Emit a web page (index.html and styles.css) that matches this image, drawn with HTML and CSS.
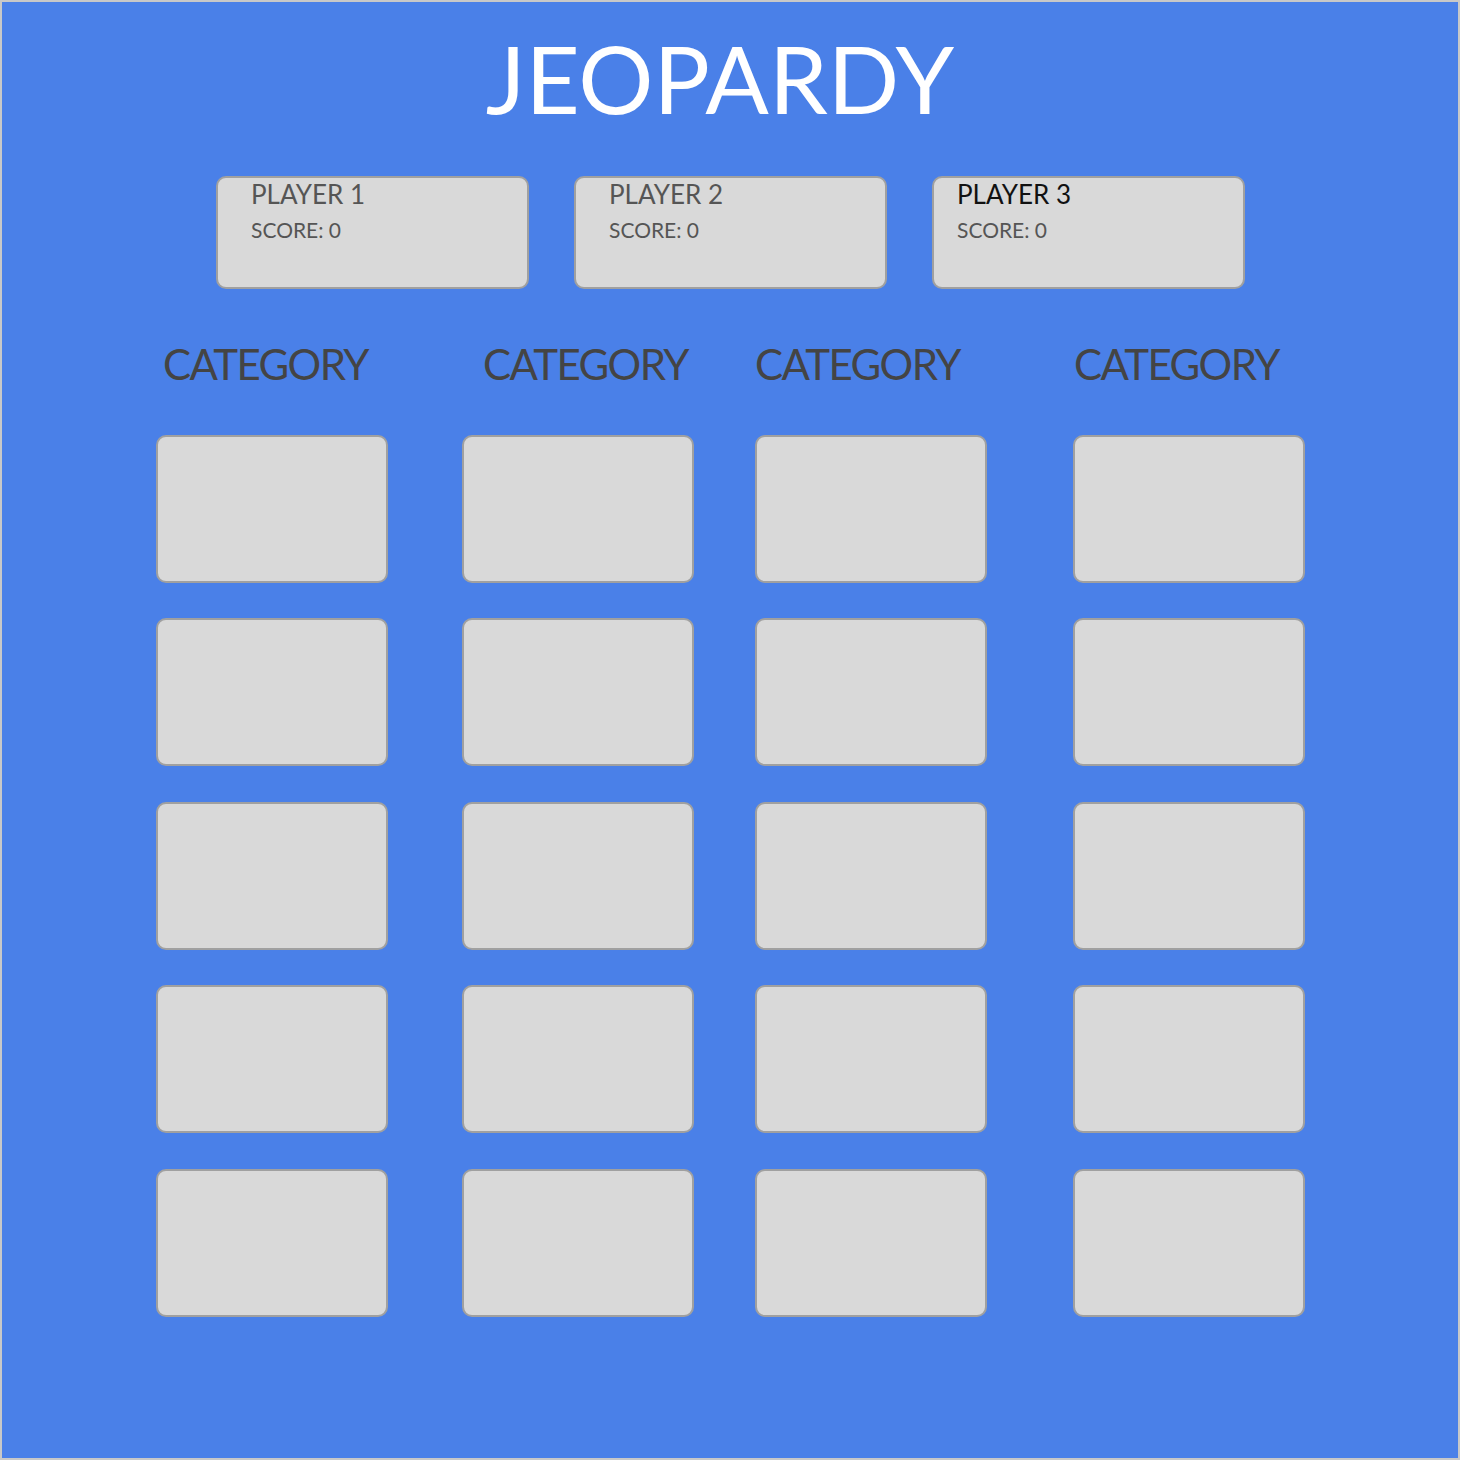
FILE: index.html
```html
<!DOCTYPE html>
<html lang="en">
<head>
    <meta charset="UTF-8">
    <meta name="viewport" content="width=device-width, initial-scale=1.0">
    <title>Jeopardy</title>
    <link rel="stylesheet" href="styles.css">
</head>
<body>

<div class="game">
    <h1 class="title">JEOPARDY</h1>

    <!-- Scoreboard -->
    <div class="players">
        <div class="player">
            <div class="player-name">PLAYER 1</div>
            <div class="player-score">SCORE: 0</div>
        </div>
        <div class="player">
            <div class="player-name">PLAYER 2</div>
            <div class="player-score">SCORE: 0</div>
        </div>
        <div class="player active">
            <div class="player-name">PLAYER 3</div>
            <div class="player-score">SCORE: 0</div>
        </div>
    </div>

    <!-- Question board -->
    <div class="board">
        <div class="column">
            <h2 class="category">CATEGORY</h2>
            <div class="tile"></div>
            <div class="tile"></div>
            <div class="tile"></div>
            <div class="tile"></div>
            <div class="tile"></div>
        </div>
        <div class="column">
            <h2 class="category">CATEGORY</h2>
            <div class="tile"></div>
            <div class="tile"></div>
            <div class="tile"></div>
            <div class="tile"></div>
            <div class="tile"></div>
        </div>
        <div class="column">
            <h2 class="category">CATEGORY</h2>
            <div class="tile"></div>
            <div class="tile"></div>
            <div class="tile"></div>
            <div class="tile"></div>
            <div class="tile"></div>
        </div>
        <div class="column">
            <h2 class="category">CATEGORY</h2>
            <div class="tile"></div>
            <div class="tile"></div>
            <div class="tile"></div>
            <div class="tile"></div>
            <div class="tile"></div>
        </div>
    </div>
</div>

</body>
</html>
```

FILE: styles.css
```css
* {
    box-sizing: border-box;
}
body {
    margin: 0;
    font-family: Lato, 'Open Sans', sans-serif;
}
.game {
    height: 1460px;
    background-color: #4a80e8;
    border: 2px solid #c8c8c8;
}
.title {
    margin: 29px 0 0;
    padding-right: 20px;
    font-size: 94px;
    line-height: 1;
    font-weight: 400;
    color: #fff;
    text-align: center;
}
.players {
    display: flex;
    gap: 45px;
    margin-top: 51px;
    padding-left: 214px;
}
.player {
    width: 313px;
    height: 113px;
    padding: 0 0 0 33px;
    background-color: #d9d9d9;
    border: 2px solid #a0a0a0;
    border-radius: 10px;
    color: #555;
}
.player.active {
    padding-left: 23px;
}
.player-name {
    font-size: 26px;
    line-height: 32px;
}
.player.active .player-name {
    color: #111;
}
.player-score {
    margin-top: 7px;
    font-size: 21px;
}
.board {
    display: flex;
    padding-left: 154px;
}
.column {
    width: 232px;
    display: flex;
    flex-direction: column;
    gap: 35.5px;
}
.column:nth-child(2) { margin-left: 74px; }
.column:nth-child(3) { margin-left: 61px; }
.column:nth-child(4) { margin-left: 86px; }
.category {
    margin: 54px 0 14px;
    font-size: 42px;
    line-height: 1;
    font-weight: 400;
    letter-spacing: -1.6px;
    color: #444;
    white-space: nowrap;
}
.column:nth-child(1) .category { padding-left: 7px; }
.column:nth-child(2) .category { padding-left: 21px; }
.column:nth-child(4) .category { padding-left: 1px; }
.tile {
    height: 148px;
    background-color: #d9d9d9;
    border: 2px solid #a0a0a0;
    border-radius: 10px;
}
```
